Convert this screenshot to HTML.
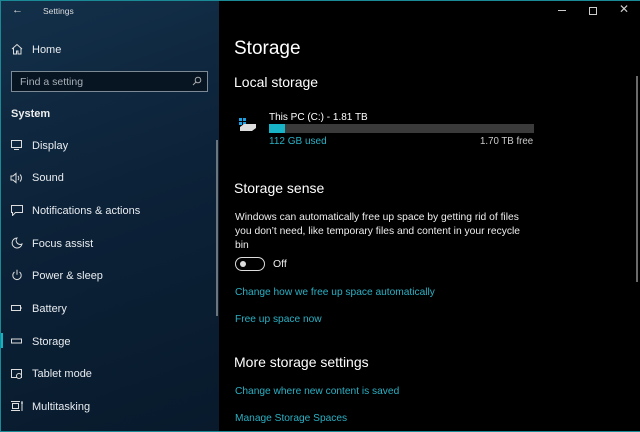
<!DOCTYPE html>
<html><head><meta charset="utf-8"><style>
*{margin:0;padding:0;box-sizing:border-box}
body{width:640px;height:432px;overflow:hidden;background:#000;font-family:"Liberation Sans",sans-serif;color:#fff;position:relative}
.frame{position:absolute;inset:0;border:1px solid #1a8a96;border-right:none;pointer-events:none;z-index:5}
.side{position:absolute;left:0;top:0;width:219px;height:432px;background:linear-gradient(160deg,#13304a 0%,#0c2238 45%,#081a2c 100%)}
.t{position:absolute;white-space:nowrap}
.nav{position:absolute;left:32px;font-size:11px;color:#e8ecf0;top:1px}
.ic{position:absolute;left:10px;width:14px;height:12px}
.lnk{color:#2ab0c4;font-size:10.2px;left:235px}
</style></head><body>
<div class="side">
  <div class="t" style="left:12px;top:4px;font-size:11px;color:#ddd">&#8592;</div>
  <div class="t" style="left:43px;top:6px;font-size:8.5px;color:#ddd">Settings</div>
  <svg class="ic" style="top:43px" viewBox="0 0 14 12"><path d="M2 6L7 1.5L12 6M3.5 5v6h3v-3h1.5v3h3V5" fill="none" stroke="#ddd" stroke-width="1"/></svg>
  <div class="nav" style="top:44px">Home</div>
  <div style="position:absolute;left:11px;top:71px;width:197px;height:21px;border:1px solid #7c8a96;background:#071421"></div>
  <div class="t" style="left:20px;top:76px;font-size:10.5px;color:#a8b0b8">Find a setting</div>
  <svg style="position:absolute;left:192px;top:76px" width="10" height="10" viewBox="0 0 10 10"><circle cx="6" cy="4" r="2.8" fill="none" stroke="#aaa" stroke-width="1"/><path d="M4 6L1 9" stroke="#aaa" stroke-width="1"/></svg>
  <div class="t" style="left:11px;top:108px;font-size:11px;font-weight:bold;color:#eee">System</div>
  <svg class="ic" style="top:139px" viewBox="0 0 14 12"><rect x="1.5" y="1.5" width="10" height="7" fill="none" stroke="#ddd"/><path d="M4 10.5h5" stroke="#ddd"/></svg>
  <div class="nav" style="top:140px">Display</div>
  <svg class="ic" style="top:172px" viewBox="0 0 14 12"><path d="M1 4h2l3-2.5v9L3 8H1z" fill="none" stroke="#ddd"/><path d="M8 4a3 3 0 0 1 0 4M10 2.5a5 5 0 0 1 0 7" fill="none" stroke="#ddd"/></svg>
  <div class="nav" style="top:172px">Sound</div>
  <svg class="ic" style="top:204px" viewBox="0 0 14 12"><path d="M1.5 1.5h11v7h-7l-3 3v-3h-1z" fill="none" stroke="#ddd"/></svg>
  <div class="nav" style="top:205px">Notifications &amp; actions</div>
  <svg class="ic" style="top:237px" viewBox="0 0 14 12"><path d="M7 1a5 5 0 1 0 5 6A4 4 0 0 1 7 1z" fill="none" stroke="#ddd"/></svg>
  <div class="nav" style="top:238px">Focus assist</div>
  <svg class="ic" style="top:269px" viewBox="0 0 14 12"><path d="M4.5 3a4.2 4.2 0 1 0 5 0M7 0.8v5" fill="none" stroke="#ddd"/></svg>
  <div class="nav" style="top:270px">Power &amp; sleep</div>
  <svg class="ic" style="top:302px" viewBox="0 0 14 12"><rect x="1.5" y="3.5" width="9" height="5" fill="none" stroke="#ddd"/><path d="M11 5v2" stroke="#ddd"/></svg>
  <div class="nav" style="top:303px">Battery</div>
  <div style="position:absolute;left:0;top:333px;width:3px;height:15px;background:#11b4c4"></div>
  <svg class="ic" style="top:335px" viewBox="0 0 14 12"><rect x="1.5" y="4" width="10" height="4" fill="none" stroke="#ddd"/></svg>
  <div class="nav" style="top:336px">Storage</div>
  <svg class="ic" style="top:368px" viewBox="0 0 14 12"><rect x="1.5" y="1.5" width="10" height="8" fill="none" stroke="#ddd"/><circle cx="9" cy="8" r="2.5" fill="#0a1e30" stroke="#ddd"/></svg>
  <div class="nav" style="top:368px">Tablet mode</div>
  <svg class="ic" style="top:400px" viewBox="0 0 14 12"><path d="M1 1.5h9M1 10.5h9M2.5 3.5h6v5h-6zM12 1v10M11 3h2" fill="none" stroke="#ddd"/></svg>
  <div class="nav" style="top:401px">Multitasking</div>
  <div style="position:absolute;left:216px;top:140px;width:2px;height:176px;background:#6a7580"></div>
</div>
<div style="position:absolute;left:558px;top:10px;width:8px;height:1px;background:#ccc"></div>
<div style="position:absolute;left:589px;top:7px;width:8px;height:8px;border:1px solid #ccc"></div>
<div class="t" style="left:619px;top:2px;font-size:12px;color:#ccc">&#10005;</div>
<div style="position:absolute;left:636px;top:76px;width:2px;height:206px;background:#6a6a6a"></div>

<div class="t" style="left:234px;top:38px;font-size:19px;color:#fff">Storage</div>
<div class="t" style="left:234px;top:74px;font-size:14px;color:#fff">Local storage</div>
<svg style="position:absolute;left:238px;top:117px" width="20" height="16" viewBox="0 0 20 16"><rect x="1" y="1" width="3" height="3" fill="#1ba1e2"/><rect x="5" y="1" width="3" height="3" fill="#1ba1e2"/><rect x="1" y="5" width="3" height="3" fill="#1ba1e2"/><rect x="5" y="5" width="3" height="3" fill="#1ba1e2"/><path d="M2 10l4-3h12v4l-4 3H2z" fill="#ddd"/></svg>
<div class="t" style="left:269px;top:112px;font-size:10px;color:#fff">This PC (C:) - 1.81 TB</div>
<div style="position:absolute;left:269px;top:124px;width:265px;height:9px;background:#3a3a3a"></div>
<div style="position:absolute;left:269px;top:124px;width:16px;height:9px;background:#16b4c6"></div>
<div class="t" style="left:269px;top:136px;font-size:10px;color:#2ab0c4">112 GB used</div>
<div class="t" style="left:480px;top:136px;font-size:9.7px;color:#ccc">1.70 TB free</div>
<div class="t" style="left:234px;top:180px;font-size:14px;color:#fff">Storage sense</div>
<div class="t" style="left:235px;top:211px;font-size:10.3px;line-height:14px;color:#eee;white-space:normal;width:300px">Windows can automatically free up space by getting rid of files you don’t need, like temporary files and content in your recycle bin</div>
<div style="position:absolute;left:235px;top:257px;width:30px;height:14px;border:1.5px solid #ddd;border-radius:7px"></div>
<div style="position:absolute;left:240px;top:261px;width:6px;height:6px;border-radius:50%;background:#ddd"></div>
<div class="t" style="left:273px;top:258px;font-size:10.5px;color:#eee">Off</div>
<div class="t lnk" style="top:287px">Change how we free up space automatically</div>
<div class="t lnk" style="top:314px">Free up space now</div>
<div class="t" style="left:234px;top:354px;font-size:14px;color:#fff">More storage settings</div>
<div class="t lnk" style="top:386px">Change where new content is saved</div>
<div class="t lnk" style="top:413px">Manage Storage Spaces</div>
<div class="frame"></div>
</body></html>
